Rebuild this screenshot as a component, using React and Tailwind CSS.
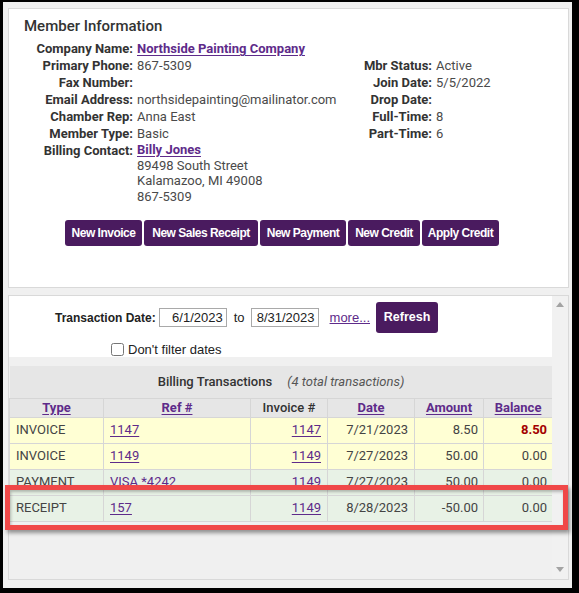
import React from "react";

const leftRows = [
  { label: "Company Name:", value: "Northside Painting Company", link: true },
  { label: "Primary Phone:", value: "867-5309" },
  { label: "Fax Number:", value: "" },
  { label: "Email Address:", value: "northsidepainting@mailinator.com" },
  { label: "Chamber Rep:", value: "Anna East" },
  { label: "Member Type:", value: "Basic" },
];

const rightRows = [
  { label: "Mbr Status:", value: "Active" },
  { label: "Join Date:", value: "5/5/2022" },
  { label: "Drop Date:", value: "" },
  { label: "Full-Time:", value: "8" },
  { label: "Part-Time:", value: "6" },
];

const actions = [
  { label: "New Invoice", w: "w-[77px]" },
  { label: "New Sales Receipt", w: "w-[114px]" },
  { label: "New Payment", w: "w-[86px]" },
  { label: "New Credit", w: "w-[72px]" },
  { label: "Apply Credit", w: "w-[77px]" },
];

const transactions = [
  { type: "INVOICE", ref: "1147", refLink: true, invoice: "1147", date: "7/21/2023", amount: "8.50", balance: "8.50", due: true, tone: "invoice" },
  { type: "INVOICE", ref: "1149", refLink: true, invoice: "1149", date: "7/27/2023", amount: "50.00", balance: "0.00", tone: "invoice" },
  { type: "PAYMENT", ref: "VISA *4242", refLink: false, invoice: "1149", date: "7/27/2023", amount: "50.00", balance: "0.00", tone: "credit" },
  { type: "RECEIPT", ref: "157", refLink: true, invoice: "1149", date: "8/28/2023", amount: "-50.00", balance: "0.00", tone: "credit" },
];

const linkCls = "text-[#5e2b8a] underline underline-offset-2";
const cell = "border border-[#d6d6d6]";

function InfoGrid({ rows, cols }) {
  return (
    <div className={`grid ${cols} gap-x-[4px] text-[13px] leading-[17px]`}>
      {rows.map((row) => (
        <React.Fragment key={row.label}>
          <div className="text-right font-bold text-[#333]">{row.label}</div>
          <div className="text-[#4a4a4a]">
            {row.link ? <a className={`${linkCls} font-bold`}>{row.value}</a> : row.value}
          </div>
        </React.Fragment>
      ))}
    </div>
  );
}

function Arrow({ down }) {
  return (
    <svg width="8" height="5" viewBox="0 0 8 5" className="fill-[#a3a3a3]">
      <path d={down ? "M0 0 L8 0 L4 5 Z" : "M0 5 L4 0 L8 5 Z"} />
    </svg>
  );
}

export default function App() {
  return (
    <div className="relative h-[593px] w-[579px] bg-black pb-[5px] pl-[3px] pr-[7px] pt-[2px] font-['Roboto',sans-serif]">
      <div className="h-full bg-[#f0f0f0] pl-[5px] pt-[6px]">
        {/* member info */}
        <div className="h-[280px] w-[561px] border border-[#d9d9d9] bg-white pl-[15px] pt-[7px]">
          <h2 className="text-[15px] font-medium leading-[20px] text-[#333]">Member Information</h2>
          <div className="mt-[4px] flex">
            <div className="w-[326px]">
              <InfoGrid rows={leftRows} cols="grid-cols-[109px_1fr]" />
              <div className="grid grid-cols-[109px_1fr] gap-x-[4px] text-[13px]">
                <div className="text-right font-bold leading-[17px] text-[#333]">Billing Contact:</div>
                <div className="leading-[15.5px] text-[#4a4a4a]">
                  <a className={`${linkCls} font-bold`}>Billy Jones</a>
                  <div>89498 South Street</div>
                  <div>Kalamazoo, MI 49008</div>
                  <div>867-5309</div>
                </div>
              </div>
            </div>
            <div className="pt-[17px]">
              <InfoGrid rows={rightRows} cols="grid-cols-[82px_1fr]" />
            </div>
          </div>
          <div className="ml-[41px] mt-[16px] flex gap-[2px] font-['Liberation_Sans',Arial,sans-serif]">
            {actions.map((a) => (
              <button
                key={a.label}
                className={`${a.w} h-[26px] rounded-[3px] bg-[#4a1b5f] text-[12px] font-bold tracking-[-0.5px] text-white`}
              >
                {a.label}
              </button>
            ))}
          </div>
        </div>

        {/* transactions */}
        <div className="mt-[7px] flex h-[285px] w-[561px] border border-[#d9d9d9] bg-[#f0f0f0]">
          <div className="w-[543px]">
            <div className="h-[61px] bg-white pt-[6px] font-['Liberation_Sans',Arial,sans-serif] text-[13px] text-[#222]">
              <div className="flex items-center pl-[46px]">
                <span className="text-[12px] font-bold">Transaction Date:</span>
                <div className="ml-[3px] flex h-[19px] w-[68px] items-center justify-end border border-[#a9a9a9] pr-[3px]">6/1/2023</div>
                <span className="ml-[7px]">to</span>
                <div className="ml-[6px] flex h-[19px] w-[68px] items-center justify-end border border-[#a9a9a9] pr-[3px]">8/31/2023</div>
                <a className="ml-[11px] text-[#5e2b8a] underline">more...</a>
                <button className="ml-[6px] h-[31px] w-[62px] rounded-[3px] bg-[#4a1b5f] text-[12.5px] font-bold text-white">
                  Refresh
                </button>
              </div>
              <label className="ml-[102px] mt-[7px] flex items-center gap-[4px]">
                <input type="checkbox" className="m-0 h-[13px] w-[13px]" />
                <span>Don't filter dates</span>
              </label>
            </div>

            <table className="mt-[9px] w-[543px] table-fixed border-collapse text-[13px] text-[#444]">
              <colgroup>
                <col className="w-[94px]" />
                <col className="w-[147px]" />
                <col className="w-[77px]" />
                <col className="w-[87px]" />
                <col className="w-[69px]" />
                <col className="w-[69px]" />
              </colgroup>
              <thead className="bg-[#e6e6e6]">
                <tr className="h-[32px]">
                  <th colSpan={6} className="border-b border-[#d6d6d6] font-medium text-[#333]">
                    Billing Transactions
                    <span className="ml-[15px] font-normal italic text-[#555]">(4 total transactions)</span>
                  </th>
                </tr>
                <tr className="h-[19px] leading-[17px]">
                  <th className={cell}><a className={linkCls}>Type</a></th>
                  <th className={cell}><a className={linkCls}>Ref #</a></th>
                  <th className={`${cell} font-medium text-[#333]`}>Invoice #</th>
                  <th className={cell}><a className={linkCls}>Date</a></th>
                  <th className={cell}><a className={linkCls}>Amount</a></th>
                  <th className={cell}><a className={linkCls}>Balance</a></th>
                </tr>
              </thead>
              <tbody>
                {transactions.map((t, i) => (
                  <tr key={i} className={`h-[26px] ${t.tone === "invoice" ? "bg-[#ffffd4]" : "bg-[#e8f2e6]"}`}>
                    <td className={`${cell} pl-[6px]`}>{t.type}</td>
                    <td className={`${cell} pl-[6px]`}>
                      {t.refLink ? <a className={linkCls}>{t.ref}</a> : <span className="text-[#5e2b8a]">{t.ref}</span>}
                    </td>
                    <td className={`${cell} pr-[6px] text-right`}><a className={linkCls}>{t.invoice}</a></td>
                    <td className={`${cell} pr-[6px] text-right`}>{t.date}</td>
                    <td className={`${cell} pr-[5px] text-right`}>{t.amount}</td>
                    <td className={`${cell} pr-[5px] text-right ${t.due ? "font-bold text-[#a30000]" : ""}`}>{t.balance}</td>
                  </tr>
                ))}
              </tbody>
            </table>
          </div>
          <div className="flex w-[16px] flex-col items-center justify-between bg-[#f1f1f1] pb-[7px] pt-[6px]">
            <Arrow />
            <Arrow down />
          </div>
        </div>
      </div>

      {/* highlight annotation */}
      <div className="pointer-events-none absolute left-[5px] top-[485px] h-[45px] w-[563px] border-[5px] border-[#f04848] shadow-[2px_3px_4px_rgba(0,0,0,0.4),inset_1px_2px_3px_rgba(0,0,0,0.25)]" />
    </div>
  );
}
